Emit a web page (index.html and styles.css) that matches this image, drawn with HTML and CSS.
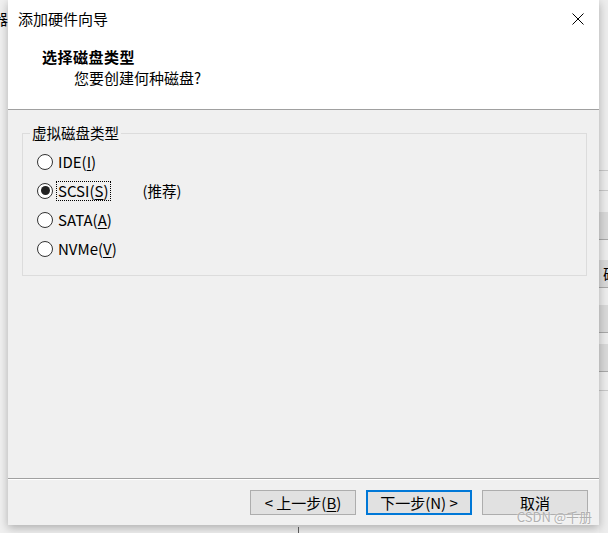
FILE: index.html
```html
<!DOCTYPE html>
<html lang="zh-CN">
<head>
<meta charset="utf-8">
<title>添加硬件向导</title>
<link rel="stylesheet" href="styles.css">
</head>
<body>
<div class="desk">
  <div class="bg-left">器</div>
  <div class="bg-right">
    <div class="bg-line l1"></div>
    <div class="bg-line l2"></div>
    <div class="bg-box b1"></div>
    <div class="bg-box b2">確</div>
    <div class="bg-box b3"></div>
    <div class="bg-box b4"></div>
    <div class="bg-line l3"></div>
  </div>
  <div class="bg-vline"></div>

  <div class="dialog">
    <div class="titlebar">
      <span class="title">添加硬件向导</span>
      <svg class="close" width="12" height="12" viewBox="0 0 12 12">
        <path d="M0.5 0.5 L11.5 11.5 M11.5 0.5 L0.5 11.5" stroke="#000" stroke-width="1" fill="none"/>
      </svg>
    </div>
    <div class="header">
      <div class="h-title">选择磁盘类型</div>
      <div class="h-sub">您要创建何种磁盘?</div>
    </div>
    <div class="content">
      <fieldset class="group">
        <legend class="legend">虚拟磁盘类型</legend>
        <div class="row">
          <span class="radio"></span>
          <span class="label">IDE(<u>I</u>)</span>
        </div>
        <div class="row">
          <span class="radio checked"></span>
          <span class="label focus">SCSI(<u>S</u>)</span>
          <span class="note">(推荐)</span>
        </div>
        <div class="row">
          <span class="radio"></span>
          <span class="label">SATA(<u>A</u>)</span>
        </div>
        <div class="row">
          <span class="radio"></span>
          <span class="label">NVMe(<u>V</u>)</span>
        </div>
      </fieldset>
    </div>
    <div class="footer">
      <button class="btn">&lt; 上一步(<u>B</u>)</button>
      <button class="btn default">下一步(N) &gt;</button>
      <button class="btn">取消</button>
    </div>
  </div>

  <div class="watermark">CSDN @千册</div>
</div>
</body>
</html>
```

FILE: styles.css
```css
html, body {
  margin: 0;
  padding: 0;
}
body {
  background: #f0f0f0;
  font-family: "Noto Sans CJK SC", "Noto Sans", sans-serif;
  color: #000;
}
.desk {
  position: relative;
  width: 608px;
  height: 533px;
  overflow: hidden;
  background: #f0f0f0;
}
.bg-left {
  position: absolute;
  left: -7px;
  top: 9px;
  font-size: 15px;
  line-height: 20px;
}
.bg-right {
  position: absolute;
  left: 599px;
  top: 0;
  width: 9px;
  height: 533px;
  background: #ededed;
  display: flex;
  flex-direction: column;
}
.bg-line {
  height: 1px;
  background: #c8c8c8;
}
.l1 { margin-top: 170px; }
.l2 { margin-top: 19px; }
.l3 { margin-top: 18px; }
.bg-box {
  height: 27px;
  background: #d9d9d9;
  border-bottom: 1px solid #a8a8a8;
  font-size: 15px;
  line-height: 27px;
  padding-left: 4px;
  overflow: hidden;
  white-space: nowrap;
}
.b1 { margin-top: 21px; }
.b2 { margin-top: 20px; }
.b3 { margin-top: 17px; }
.b4 { margin-top: 11px; }
.bg-vline {
  position: absolute;
  left: 298px;
  top: 527px;
  width: 1px;
  height: 6px;
  background: #606060;
}

.dialog {
  position: absolute;
  left: 8px;
  top: 0;
  width: 591px;
  height: 525px;
  background: #f0f0f0;
  box-shadow: 0 3px 9px rgba(0, 0, 0, 0.28);
  display: flex;
  flex-direction: column;
}
.titlebar {
  height: 38px;
  background: #fff;
  display: flex;
  align-items: center;
  justify-content: space-between;
  padding: 0 15px 0 10px;
  flex-shrink: 0;
}
.title {
  font-size: 15px;
  line-height: 20px;
}
.close {
  display: block;
}
.header {
  height: 72px;
  background: #fff;
  border-bottom: 1px solid #a0a0a0;
  padding: 8px 0 0 34px;
  box-sizing: border-box;
  flex-shrink: 0;
}
.h-title {
  font-size: 15px;
  font-weight: bold;
  line-height: 21px;
  letter-spacing: 0.5px;
}
.h-sub {
  font-size: 15px;
  line-height: 21px;
  padding-left: 32px;
}
.content {
  flex: 1;
  padding: 13px 12px 0 14px;
}
.group {
  margin: 0;
  border: 1px solid #dcdcdc;
  padding: 4px 0 12px 14px;
}
.legend {
  font-size: 14.5px;
  line-height: 20px;
  padding: 0 2px;
  margin-left: -7px;
}
.row {
  height: 29px;
  display: flex;
  align-items: center;
}
.radio {
  width: 14px;
  height: 14px;
  border: 1px solid #333;
  border-radius: 50%;
  background: #fff;
  box-sizing: content-box;
  position: relative;
  flex-shrink: 0;
}
.radio.checked::after {
  content: "";
  position: absolute;
  left: 2.5px;
  top: 2.5px;
  width: 9px;
  height: 9px;
  border-radius: 50%;
  background: #222;
}
.label {
  font-size: 15px;
  line-height: 18px;
  margin-left: 3px;
  padding: 0 1px;
  border: 1px dotted transparent;
}
.label.focus {
  border-color: #000;
}
.label u, .btn u {
  text-underline-offset: 2px;
}
.note {
  font-size: 14.5px;
  margin-left: 32px;
}
.footer {
  height: 47px;
  border-top: 1px solid #a0a0a0;
  box-shadow: inset 0 1px 0 #fff;
  box-sizing: border-box;
  display: flex;
  justify-content: flex-end;
  align-items: flex-start;
  padding: 11px 11px 0 0;
  gap: 10px;
  flex-shrink: 0;
}
.btn {
  width: 106px;
  height: 25px;
  margin: 0;
  padding: 0;
  background: #e1e1e1;
  border: 1px solid #adadad;
  font-family: "Noto Sans CJK SC", "Noto Sans", sans-serif;
  font-size: 15px;
  line-height: 21px;
  color: #000;
}
.btn.default {
  border: 2px solid #0078d7;
}
.watermark {
  position: absolute;
  right: 16px;
  bottom: 9px;
  font-size: 13px;
  line-height: 14px;
  color: #b0b0b0;
  text-shadow: 0 0 2px #fff;
}
```
